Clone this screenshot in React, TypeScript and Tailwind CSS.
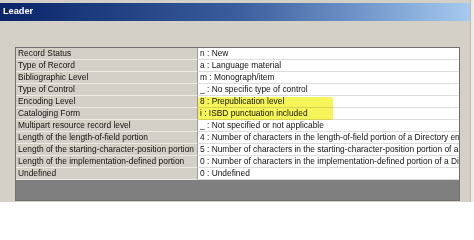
import React from "react"

const rows: [string, string][] = [
  ["Record Status", "n : New"],
  ["Type of Record", "a : Language material"],
  ["Bibliographic Level", "m : Monograph/item"],
  ["Type of Control", "_ : No specific type of control"],
  ["Encoding Level", "8 : Prepublication level"],
  ["Cataloging Form", "i : ISBD punctuation included"],
  ["Multipart resource record level", "_ : Not specified or not applicable"],
  [
    "Length of the length-of-field portion",
    "4 : Number of characters in the length-of-field portion of a Directory entry",
  ],
  [
    "Length of the starting-character-position portion",
    "5 : Number of characters in the starting-character-position portion of a Directory entry",
  ],
  [
    "Length of the implementation-defined portion",
    "0 : Number of characters in the implementation-defined portion of a Directory entry",
  ],
  ["Undefined", "0 : Undefined"],
]

export default function App() {
  return (
    <div className="flex w-[474px] h-[202px] overflow-hidden bg-[#d4d0c8] font-['Liberation_Sans',Arial,sans-serif]">
      <div className="flex w-[470px] flex-col">
        {/* Title bar */}
        <div className="mt-[3px] flex h-[18px] items-center bg-gradient-to-r from-[#0a246a] via-[#3a5c9c] to-[#a6caf0] pl-[3px]">
          <span className="text-[9.2px] font-bold text-white">Leader</span>
        </div>

        {/* Grid */}
        <div className="relative mt-[26px] mb-[1px] ml-[15px] w-[445px] flex-1 border border-[#6f6f6f] bg-[#7f7f7f]">
          {rows.map(([label, value]) => (
            <div key={label} className="flex h-[12px] text-[8.4px] leading-[11px] text-[#111]">
              <div className="w-[182px] shrink-0 overflow-hidden whitespace-nowrap border-b border-r border-b-[#ecebe8] border-r-[#9a9a9a] bg-[#d4d0c8] pl-[2px]">
                {label}
              </div>
              <div className="flex-1 overflow-hidden whitespace-nowrap border-b border-[#dcdcdc] bg-white pl-[2px]">
                {value}
              </div>
            </div>
          ))}

          {/* Highlighter mark */}
          <div className="pointer-events-none absolute left-[182px] top-[49px] h-[23px] w-[135px] rounded-[2px] bg-[#f6f65a] mix-blend-multiply" />
        </div>
      </div>
      <div className="w-[4px] border-l border-[#bdbab3] bg-[#ecebe8]" />
    </div>
  )
}
